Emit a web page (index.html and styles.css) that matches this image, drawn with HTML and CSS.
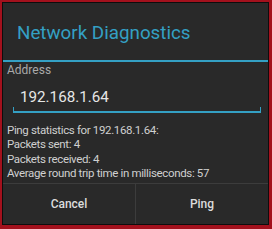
FILE: index.html
```html
<!DOCTYPE html>
<html lang="en">
<head>
  <meta charset="UTF-8">
  <meta name="viewport" content="width=device-width, initial-scale=1.0">
  <title>Network Diagnostics</title>
  <link rel="stylesheet" href="styles.css">
</head>
<body>
  <div class="dialog">
    <h1 class="dialog__title">Network Diagnostics</h1>

    <div class="dialog__body">
      <label class="field__label" for="address">Address</label>
      <div class="field">
        <input class="field__input" id="address" type="text" value="192.168.1.64">
      </div>

      <div class="stats">
        <div>Ping statistics for 192.168.1.64:</div>
        <div>Packets sent: 4</div>
        <div>Packets received: 4</div>
        <div>Average round trip time in milliseconds: 57</div>
      </div>
    </div>

    <div class="actions">
      <button class="actions__button" type="button">Cancel</button>
      <button class="actions__button" type="button">Ping</button>
    </div>
  </div>
</body>
</html>
```
FILE: styles.css
```css
:root {
  --color-frame: #a3111d;
  --color-bg: #292929;
  --color-accent: #34a0c4;
  --color-text: #e6e6e6;
  --color-muted: #a9a9a9;
}
*,
*::after,
*::before {
  box-sizing: border-box;
}
html,
body {
  height: 100%;
}
body {
  display: flex;
  margin: 0;
  padding: 2px 3px 4px 2px;
  background-color: var(--color-frame);
  font-family: Roboto, sans-serif;
}
.dialog {
  display: flex;
  flex-direction: column;
  flex: 1;
  border: 1px solid #0d0d0d;
  background-color: var(--color-bg);
}
.dialog__title {
  margin: 0;
  height: 59px;
  padding: 19px 0 0 14px;
  border-bottom: 2px solid var(--color-accent);
  color: var(--color-accent);
  font-size: 18.8px;
  font-weight: 400;
  line-height: 22px;
}
.dialog__body {
  flex: 1;
  padding: 1px 0 0 4px;
}
.field__label {
  display: block;
  color: var(--color-muted);
  font-size: 12px;
  line-height: 14px;
}
.field {
  position: relative;
  margin: 11px 7px 0 6px;
  border-bottom: 2px solid var(--color-accent);
}
.field::before,
.field::after {
  content: "";
  position: absolute;
  bottom: 0;
  width: 1px;
  height: 4px;
  background-color: var(--color-accent);
}
.field::before {
  left: 0;
}
.field::after {
  right: 0;
}
.field__input {
  display: block;
  width: 100%;
  padding: 0 0 4px 7px;
  border: 0;
  background: none;
  color: var(--color-text);
  font-family: inherit;
  font-size: 15.2px;
  line-height: 19px;
  outline: none;
}
.stats {
  margin-top: 10px;
  color: #d0d0d0;
  font-size: 11.5px;
  letter-spacing: -0.35px;
  line-height: 14.3px;
}
.actions {
  display: flex;
  height: 41px;
  border-top: 1px solid #3c3c3c;
}
.actions__button {
  flex: 1;
  border: 0;
  background: none;
  color: #dcdcdc;
  font-family: inherit;
  font-size: 12px;
  font-weight: 500;
}
.actions__button + .actions__button {
  border-left: 1px solid #3c3c3c;
}
```
